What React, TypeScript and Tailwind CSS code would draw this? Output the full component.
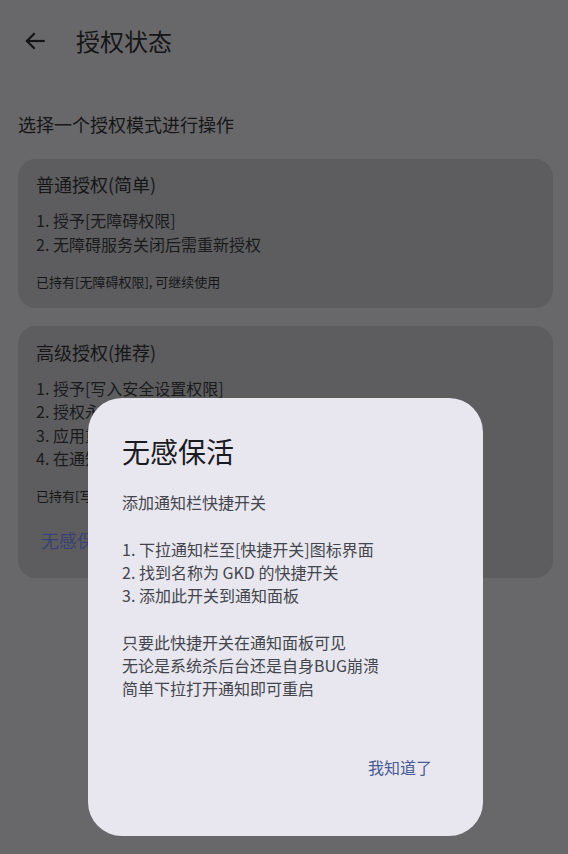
const font = { fontFamily: '"Noto Sans CJK SC", "Noto Sans", sans-serif' };

function BackArrow() {
  return (
    <svg width="26" height="26" viewBox="0 0 24 24" fill="none" stroke="#141414" strokeWidth="2" strokeLinecap="square">
      <path d="M20 12H5" />
      <path d="M11 5.5L4.5 12L11 18.5" />
    </svg>
  );
}

export default function App() {
  return (
    <div style={font} className="relative h-[854px] w-[568px] overflow-hidden bg-[#68686a] text-[#161617]">
      {/* Top bar */}
      <div className="flex h-[82px] items-center pl-[22px]">
        <BackArrow />
        <span className="ml-[28px] text-[24px] leading-[32px]">授权状态</span>
      </div>

      <div className="mt-[29px] px-[18px] text-[18px] leading-[26px]">选择一个授权模式进行操作</div>

      {/* Card 1 */}
      <div className="ml-[18px] mr-[15px] mt-[22px] rounded-[18px] bg-[#5d5d60] px-[18px] pb-[16px] pt-[12px]">
        <div className="text-[18px] leading-[26px]">普通授权(简单)</div>
        <div className="mt-[11px] text-[16px] leading-[24px] text-[#1a1a1b]">
          <div>1. 授予[无障碍权限]</div>
          <div>2. 无障碍服务关闭后需重新授权</div>
        </div>
        <div className="mt-[16px] text-[13px] leading-[20px]">已持有[无障碍权限], 可继续使用</div>
      </div>

      {/* Card 2 */}
      <div className="ml-[18px] mr-[15px] mt-[18px] rounded-[18px] bg-[#5d5d60] px-[18px] pb-[18px] pt-[13px]">
        <div className="text-[18px] leading-[26px]">高级授权(推荐)</div>
        <div className="mt-[12px] text-[16px] leading-[23.3px] text-[#1a1a1b]">
          <div>1. 授予[写入安全设置权限]</div>
          <div>2. 授权永久有效, 包含无障碍权限</div>
          <div>3. 应用重启后可自动打开无障碍服务</div>
          <div>4. 在通知栏快捷开关可快捷重启</div>
        </div>
        <div className="mt-[16px] text-[13px] leading-[20px]">已持有[写入安全设置权限], 可继续使用</div>
        <div className="mt-[14px] flex h-[40px] items-center gap-4">
          <span className="px-[5px] text-[18px] text-[#3a4272]">无感保活</span>
          <span className="px-[5px] text-[18px] text-[#3a4272]">重启服务</span>
        </div>
      </div>

      {/* Dialog */}
      <div className="absolute left-[88px] top-[398px] h-[438px] w-[395px] rounded-[34px] bg-[#e8e7ef] pl-[34px] pr-[34px] pt-[35px]">
        <div className="text-[28px] leading-[36px] text-[#1b1b1f]">无感保活</div>
        <div className="mt-[22px] text-[16px] leading-[23.3px] text-[#44454c]">
          <div>添加通知栏快捷开关</div>
          <div>&nbsp;</div>
          <div>1. 下拉通知栏至[快捷开关]图标界面</div>
          <div>2. 找到名称为 GKD 的快捷开关</div>
          <div>3. 添加此开关到通知面板</div>
          <div>&nbsp;</div>
          <div>只要此快捷开关在通知面板可见</div>
          <div>无论是系统杀后台还是自身BUG崩溃</div>
          <div>简单下拉打开通知即可重启</div>
        </div>
        <div className="mt-[54px] flex justify-end">
          <span className="px-[17px] text-[16px] leading-[24px] text-[#4a5a94]">我知道了</span>
        </div>
      </div>
    </div>
  );
}
